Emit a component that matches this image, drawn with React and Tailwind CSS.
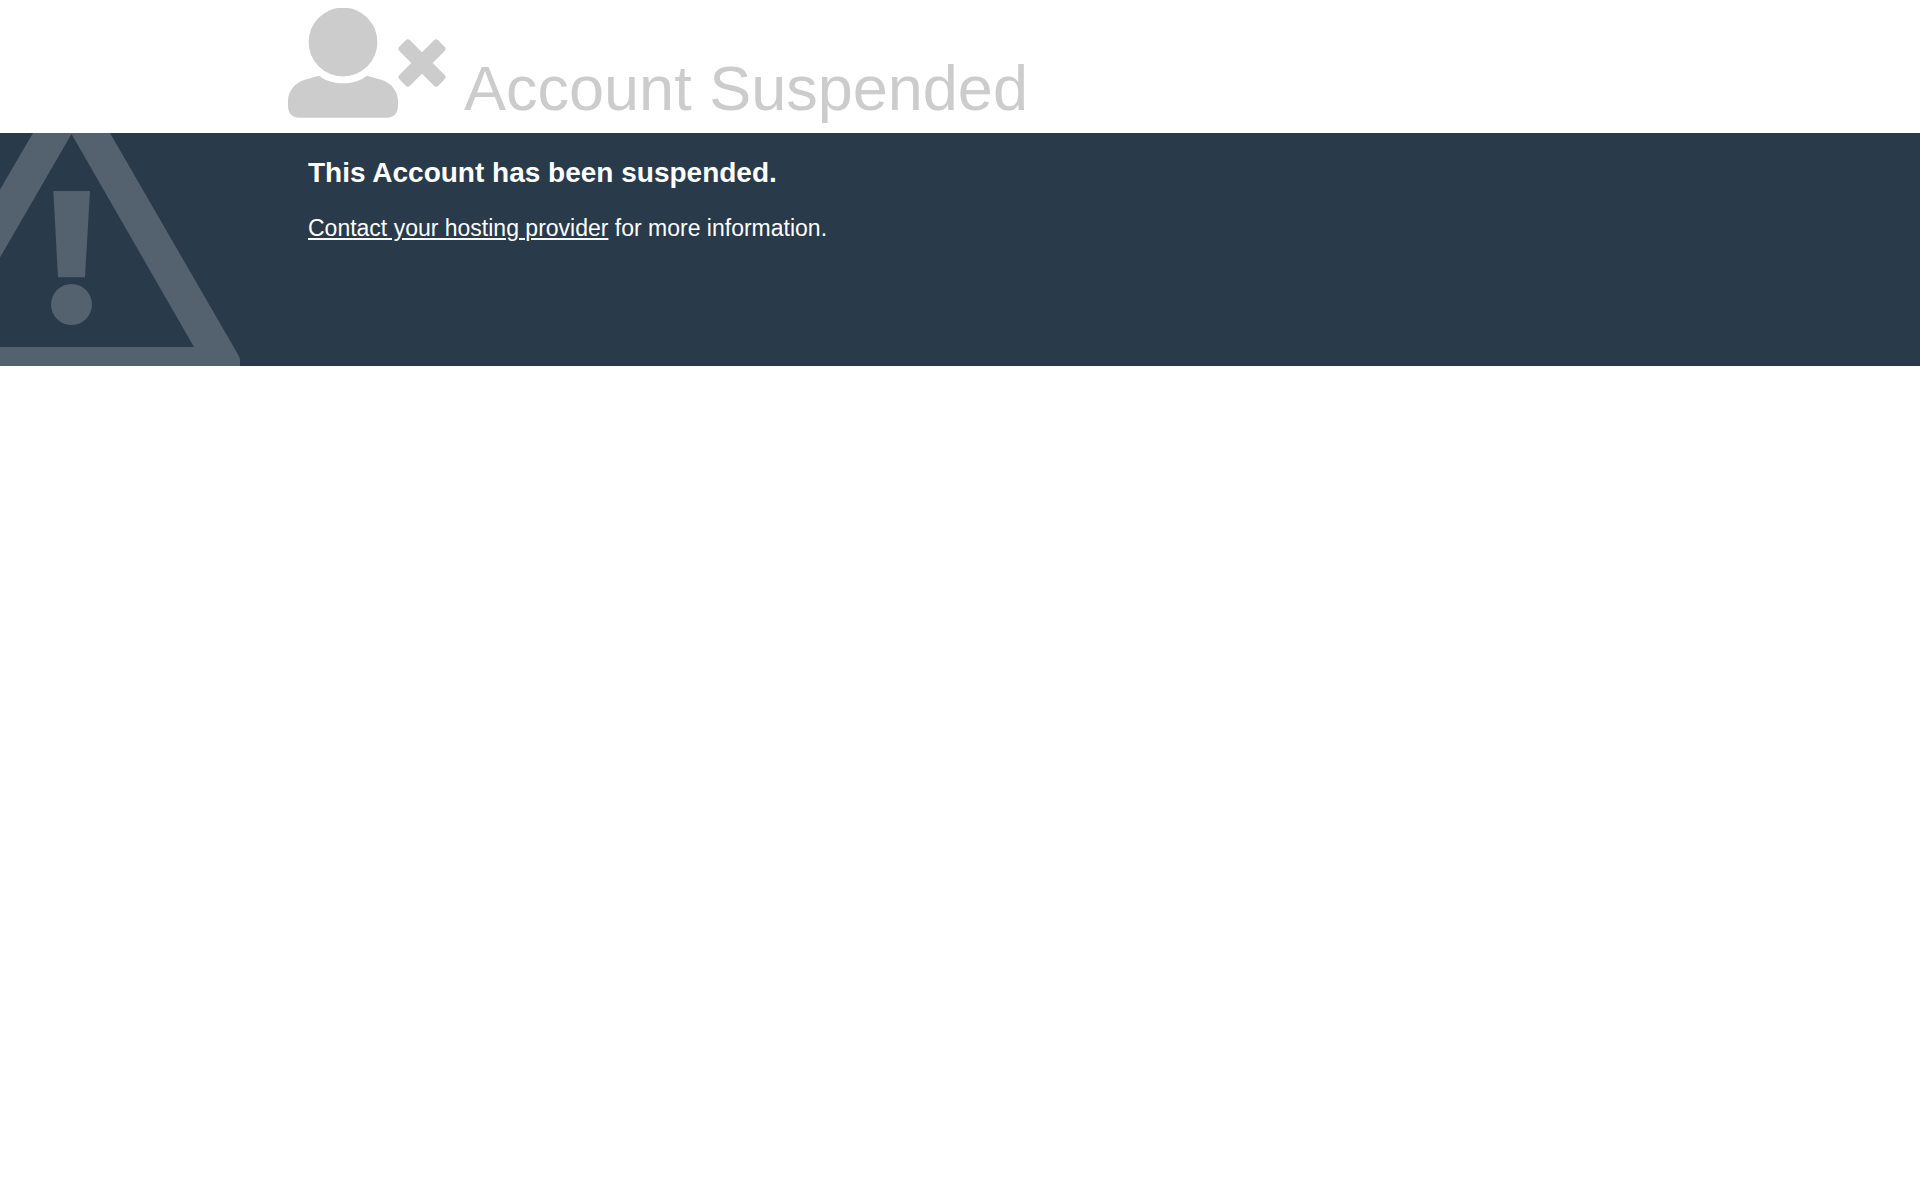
const UserTimesIcon = () => (
  <svg
    className="h-[112px] w-[160px] shrink-0 fill-[#cccccc]"
    viewBox="0 0 160 112"
    aria-hidden="true"
  >
    <circle cx="55" cy="34" r="34.400" />
    <path d="M31 67.700C38 73 46 75.300 55 75.300S72 73 79 67.700L94 72C103 75 110 83 110 93V98C110 105 106 109.700 99 109.700H11C4 109.700 0 105 0 98V93C0 83 7 75 16 72Z" />
    <g transform="translate(134 55) rotate(45)">
      <rect x="-27.500" y="-7.500" width="55" height="15" rx="3" />
      <rect x="-7.500" y="-27.500" width="15" height="55" rx="3" />
    </g>
  </svg>
)

const WarningIcon = () => (
  <svg
    className="h-[233px] w-[240px] shrink-0 fill-[#54616e]"
    viewBox="0 0 240 233"
    aria-hidden="true"
  >
    <path
      fillRule="evenodd"
      d="M33 0H110L238 221.500Q240 225 240 227V233H0V214H194L71.500 1L0 124.500V56.500Z"
    />
    <path d="M53.300 58H90L85 144.300H58Z" />
    <circle cx="71.500" cy="171.500" r="20.500" />
  </svg>
)

const App = () => {
  return (
    <div className="min-h-screen bg-white font-['Liberation_Sans',Arial,sans-serif]">
      <header className="flex items-start gap-4 px-[15%] pt-2 pb-2">
        <UserTimesIcon />
        <h1 className="pt-11 text-[63px] leading-[73px] text-[#cccccc]">
          Account Suspended
        </h1>
      </header>
      <main className="flex bg-[#293a4a] text-white">
        <div className="w-[15%] shrink-0">
          <WarningIcon />
        </div>
        <section className="flex-1 px-5 pt-6">
          <h2 className="text-[28px] leading-8 font-bold">
            This Account has been suspended.
          </h2>
          <p className="mt-[25px] text-[23px] leading-7">
            <a href="#contact" className="underline">
              Contact your hosting provider
            </a>{" "}
            for more information.
          </p>
        </section>
      </main>
    </div>
  )
}

export default App
